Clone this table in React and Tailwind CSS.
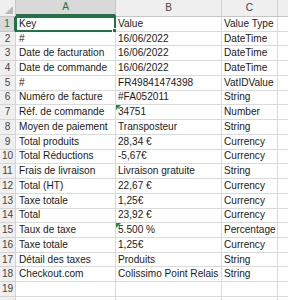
import React from "react";

const rows = [
  ["Key", "Value", "Value Type"],
  ["#", "16/06/2022", "DateTime"],
  ["Date de facturation", "16/06/2022", "DateTime"],
  ["Date de commande", "16/06/2022", "DateTime"],
  ["#", "FR49841474398", "VatIDValue"],
  ["Numéro de facture", "#FA052011", "String"],
  ["Réf. de commande", "34751", "Number", true],
  ["Moyen de paiement", "Transposteur", "String"],
  ["Total produits", "28,34 €", "Currency"],
  ["Total Réductions", "-5,67€", "Currency"],
  ["Frais de livraison", "Livraison gratuite", "String"],
  ["Total (HT)", "22,67 €", "Currency"],
  ["Taxe totale", "1,25€", "Currency"],
  ["Total", "23,92 €", "Currency"],
  ["Taux de taxe", "5.500 %", "Percentage", true],
  ["Taxe totale", "1,25€", "Currency"],
  ["Détail des taxes", "Produits", "String"],
  ["Checkout.com", "Colissimo Point Relais", "String"],
  ["", "", ""],
  ["", "", ""],
];

export default function App() {
  return (
    <div
      className="w-[288px] h-[300px] overflow-hidden bg-white text-[#1a1a1a] text-[10.1px] leading-none"
      style={{ fontFamily: '"Liberation Sans", Arial, sans-serif' }}
    >
      {/* header row */}
      <div className="flex h-[17px] bg-[#efefef] border-b border-[#c6c6c6] text-[#444]">
        <div className="relative w-[16px] shrink-0 border-r border-[#c6c6c6]">
          <div className="absolute right-[2px] bottom-[2px] w-0 h-0 border-l-[8px] border-l-transparent border-b-[8px] border-b-[#b8b8b8]" />
        </div>
        <div className="w-[100px] shrink-0 flex items-center justify-center bg-[#d9d9d9] text-[#217346] border-r border-[#c6c6c6] border-b-2 border-b-[#217346] pt-[1px]">A</div>
        <div className="w-[106px] shrink-0 flex items-center justify-center border-r border-[#d4d4d4]">B</div>
        <div className="w-[56px] shrink-0 flex items-center justify-center border-r border-[#d4d4d4]">C</div>
        <div className="flex-1" />
      </div>
      {rows.map((r, i) => (
        <div key={i} className="flex h-[14.74px]">
          <div
            className={
              "w-[16px] shrink-0 flex items-center justify-center border-r border-b " +
              (i === 0
                ? "bg-[#d9d9d9] text-[#217346] border-r-[#217346] border-r-2 border-b-[#c6c6c6]"
                : "bg-[#efefef] text-[#444] border-[#d4d4d4]")
            }
          >
            {i < 19 ? i + 1 : ""}
          </div>
          <div className="relative w-[100px] shrink-0 flex items-center pl-[3px] whitespace-nowrap border-r border-b border-[#dadada]">
            {r[0]}
            {i === 0 && (
              <div className="absolute -left-[1px] -top-[1px] -right-[1px] -bottom-[1px] border-2 border-[#217346] pointer-events-none">
                <div className="absolute -right-[3px] -bottom-[3px] w-[5px] h-[5px] bg-[#217346] border border-white" />
              </div>
            )}
          </div>
          <div className="relative w-[106px] shrink-0 flex items-center pl-[2px] whitespace-nowrap overflow-hidden border-r border-b border-[#dadada]">
            {r[3] && (
              <div className="absolute left-0 top-0 w-0 h-0 border-t-[5px] border-t-[#1e8a3c] border-r-[5px] border-r-transparent" />
            )}
            {r[1]}
          </div>
          <div className="w-[56px] shrink-0 flex items-center pl-[2px] whitespace-nowrap border-r border-b border-[#dadada]">
            {r[2]}
          </div>
          <div className="flex-1 border-b border-[#dadada]" />
        </div>
      ))}
    </div>
  );
}
